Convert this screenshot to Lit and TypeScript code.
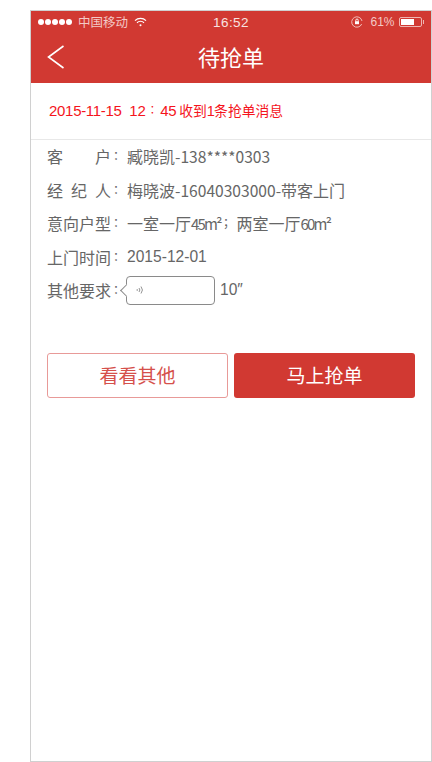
import { LitElement, html, css } from "lit";
import { customElement } from "lit/decorators.js";

@customElement("app-root")
export class AppRoot extends LitElement {
  static styles = css`
    :host {
      display: block;
      width: 432px;
      height: 762px;
      box-sizing: border-box;
      padding: 10px 0 0 30px;
      background: #fff;
      font-family: "Noto Sans CJK SC", "Liberation Sans", sans-serif;
      overflow: hidden;
    }
    .frame {
      box-sizing: border-box;
      width: 402px;
      height: 752px;
      border: 1px solid #d0d0d0;
      display: flex;
      flex-direction: column;
    }
    .head { background: #d13932; color: #fff; height: 72px; flex: none; }
    .status {
      height: 22px;
      display: grid;
      grid-template-columns: 1fr auto 1fr;
      align-items: center;
      padding: 0 7px;
      font-size: 12px;
      color: #f3c9c6;
    }
    .status-l, .status-r { display: flex; align-items: center; }
    .status-r { justify-content: flex-end; gap: 4px; }
    .dots { display: flex; gap: 1px; margin-right: 6px; }
    .dots i { width: 6px; height: 6px; border-radius: 50%; background: #fff; display: block; }
    .carrier { font-size: 12.5px; margin-right: 6px; line-height: 1; }
    .time { font-family: "Liberation Sans", sans-serif; font-size: 13.5px; color: #f8e3e1; letter-spacing: 0.4px; }
    .pct { font-family: "Liberation Sans", sans-serif; font-size: 12px; }
    .lock { margin-right: 3px; }
    .batt { display: flex; align-items: center; }
    .batt-body { width: 23px; height: 10px; border: 1px solid #eeb5b1; border-radius: 2px; box-sizing: border-box; padding: 1px; }
    .batt-fill { width: 13px; height: 6px; background: #fff; }
    .batt-tip { width: 1.5px; height: 4px; background: #eeb5b1; margin-left: 1px; }
    .nav {
      height: 50px;
      display: grid;
      grid-template-columns: 1fr auto 1fr;
      align-items: center;
      padding: 0 16px;
    }
    .title { font-size: 22px; line-height: 1; margin-top: -4px; }
    .back { display: block; margin-top: -3px; }
    .notice {
      height: 57px;
      flex: none;
      box-sizing: border-box;
      border-bottom: 1px solid #e8e8e8;
      display: flex;
      align-items: center;
      padding: 0 0 3px 18px;
      color: #f5141c;
      font-size: 13.8px;
      gap: 3px;
    }
    .date {
      font-family: "Liberation Sans", sans-serif;
      font-size: 15px;
      letter-spacing: -0.3px;
      white-space: pre;
    }
    .one { font-family: "Liberation Sans", sans-serif; font-size: 14.5px; letter-spacing: -0.8px; }
    .n { font-size: 15.6px; }
    .tight { font-size: 15px; letter-spacing: -1.8px; }
    .c {
      font-family: "Noto Sans CJK TC", sans-serif;
      display: inline-block;
      transform: translateX(-3px) scale(0.75);
    }
    .notice .c { transform: scale(0.75); }
    .rows {
      margin-top: -0.5px;
      padding: 0 0 0 16px;
      color: #666;
      font-size: 16px;
      display: flex;
      flex-direction: column;
    }
    .row { height: 33.5px; display: flex; align-items: center; white-space: nowrap; }
    .k { width: 80px; flex: none; display: flex; justify-content: space-between; }
    .num { font-family: "Liberation Sans", sans-serif; font-size: 15.6px; }
    .voice {
      position: relative;
      width: 89px;
      height: 29px;
      box-sizing: border-box;
      border: 1px solid #8a8a8a;
      border-radius: 4px;
      margin: 0 5px 0 -1px;
      background: #fff;
      display: flex;
      align-items: center;
      padding-left: 9px;
    }
    .voice::before {
      content: "";
      position: absolute;
      left: -5px;
      top: 9px;
      width: 8px;
      height: 8px;
      background: #fff;
      border-left: 1px solid #8a8a8a;
      border-bottom: 1px solid #8a8a8a;
      transform: rotate(45deg);
    }
    .btns { display: flex; gap: 6px; padding: 45.5px 0 0 16px; }
    .btn {
      width: 181px;
      height: 45px;
      box-sizing: border-box;
      border-radius: 3px;
      display: flex;
      align-items: center;
      justify-content: center;
      font-size: 19px;
      padding-bottom: 2px;
    }
    .ghost { border: 1px solid #e89a98; color: #d5504b; background: #fff; }
    .solid { background: #d13932; color: #fff; }
  `;

  render() {
    return html`
      <div class="frame">
        <div class="head">
          <div class="status">
            <div class="status-l">
              <span class="dots"><i></i><i></i><i></i><i></i><i></i></span>
              <span class="carrier">中国移动</span>
              <svg width="13" height="10" viewBox="0 0 13 10" fill="none" stroke="#fff" stroke-width="1.2">
                <path d="M1 3.6a7.8 7.8 0 0 1 11 0" /><path d="M3 5.7a5 5 0 0 1 7 0" />
                <circle cx="6.5" cy="8.2" r="1" fill="#fff" stroke="none" />
              </svg>
            </div>
            <span class="time">16:52</span>
            <div class="status-r">
              <svg class="lock" width="12" height="12" viewBox="0 0 12 12" fill="none" stroke="#f3c9c6" stroke-width="0.9">
                <path d="M10.7 8A5.2 5.2 0 1 1 11 5" /><rect x="4" y="5.2" width="4" height="3" fill="#fff" stroke="none" />
                <path d="M4.8 5.2V4.2a1.2 1.2 0 0 1 2.4 0v1" stroke="#fff" />
              </svg>
              <span class="pct">61%</span>
              <span class="batt"><span class="batt-body"><div class="batt-fill"></div></span><span class="batt-tip"></span></span>
            </div>
          </div>
          <div class="nav">
            <svg class="back" width="18" height="24" viewBox="0 0 18 24" fill="none" stroke="#fff" stroke-width="1.6">
              <path d="M16.5 1 1.5 12l15 11" />
            </svg>
            <span class="title">待抢单</span>
            <span></span>
          </div>
        </div>
        <div class="notice">
          <span class="date">2015-11-15  12<span class="c">：</span>45</span>
          <span>收到<span class="one">1</span>条抢单消息</span>
        </div>
        <div class="rows">
          <div class="row"><span class="k"><span>客</span><span>户<span class="c">：</span></span></span><span>臧晓凯<span class="n">-138****0303</span></span></div>
          <div class="row"><span class="k"><span>经</span><span>纪</span><span>人<span class="c">：</span></span></span><span>梅晓波<span class="n">-16040303000-</span>带客上门</span></div>
          <div class="row"><span class="k"><span>意向户型<span class="c">：</span></span></span><span>一室一厅<span class="tight">45m²</span><span class="c">；</span>两室一厅<span class="tight">60m²</span></span></div>
          <div class="row"><span class="k"><span>上门时间<span class="c">：</span></span></span><span class="num">2015-12-01</span></div>
          <div class="row">
            <span class="k"><span>其他要求<span class="c">：</span></span></span>
            <span class="voice">
              <svg width="8" height="10" viewBox="0 0 8 10" fill="none" stroke="#777" stroke-width="0.8">
                <circle cx="1.2" cy="5" r="0.7" fill="#777" stroke="none" />
                <path d="M3 3a3 3 0 0 1 0 4" /><path d="M5 1.5a5.5 5.5 0 0 1 0 7" />
              </svg>
            </span>
            <span class="num">10″</span>
          </div>
        </div>
        <div class="btns">
          <div class="btn ghost">看看其他</div>
          <div class="btn solid">马上抢单</div>
        </div>
      </div>
    `;
  }
}
